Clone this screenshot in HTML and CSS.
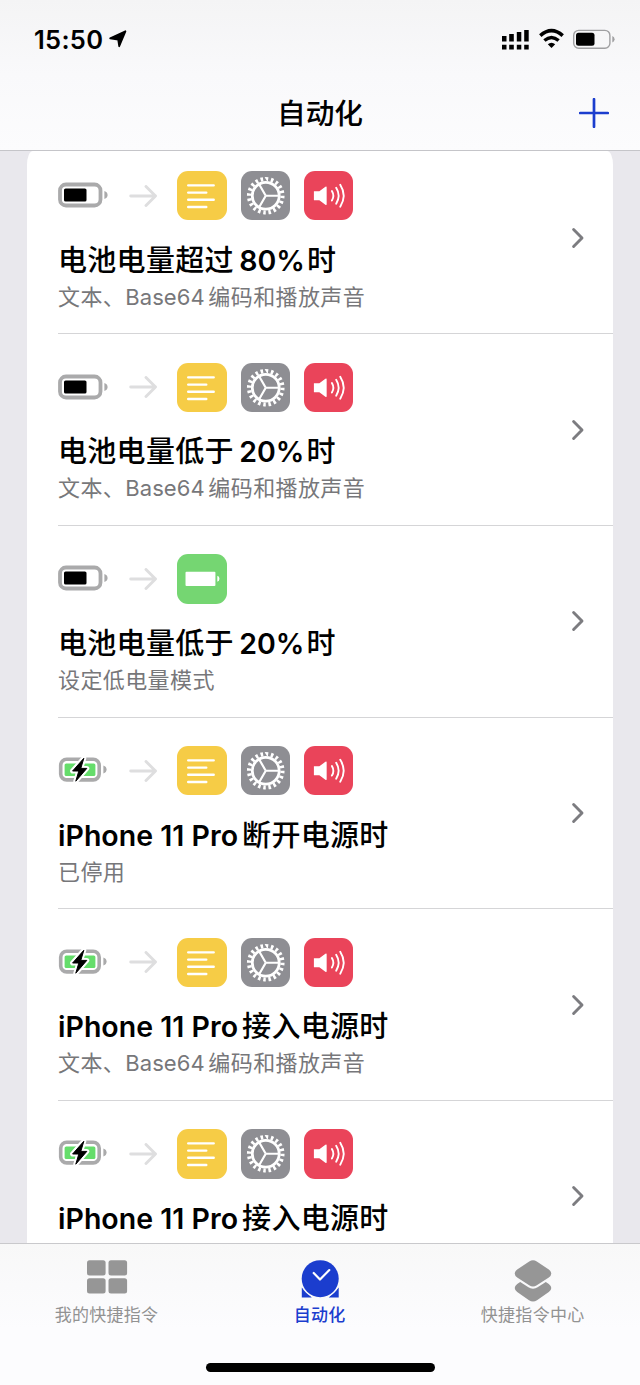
FILE: index.html
```html
<!DOCTYPE html>
<html lang="zh-CN">
<head>
<meta charset="utf-8">
<title>自动化</title>
<link rel="stylesheet" href="styles.css">
</head>
<body>
<svg class="symbols" width="0" height="0">
  <symbol id="battery" viewBox="0 0 50 26">
    <rect x="2" y="2.500" width="40.500" height="21" rx="6" fill="none" stroke="#aaaaab" stroke-width="3.800"/>
    <rect x="6" y="6.500" width="22.500" height="13" rx="1.600" fill="#000"/>
    <path d="M46.400 9.100q3.200 1.200 3.200 4t-3.200 4z" fill="#aaaaab"/>
  </symbol>
  <symbol id="charging" viewBox="0 0 50 26">
    <rect x="2.700" y="2.300" width="38.500" height="20.600" rx="6" fill="none" stroke="#aaaaab" stroke-width="3.600"/>
    <rect x="6.600" y="6.400" width="30.800" height="12.600" rx="1.600" fill="#65dd6b"/>
    <path d="M45.400 8.600q3.200 1.200 3.200 4t-3.200 4z" fill="#aaaaab"/>
    <path d="M25.800 1.300 14.600 14h6.200l-3 10.200L28.800 11.400h-6z" fill="#000" stroke="#fff" stroke-width="5" stroke-linejoin="round"/>
    <path d="M25.800 1.300 14.600 14h6.200l-3 10.200L28.800 11.400h-6z" stroke="#000" stroke-width="1" stroke-linejoin="round"/>
  </symbol>
  <symbol id="arrow" viewBox="0 0 28 22">
    <path d="M1.700 11H26.500M17 1.500 26.500 11l-9.500 9.500" fill="none" stroke="#dededf" stroke-width="2.900" stroke-linecap="round" stroke-linejoin="round"/>
  </symbol>
  <symbol id="text" viewBox="0 0 50 50">
    <path d="M11.300 14.500h25.800M11.300 21.800h18.300M11.300 29.100h25.800M11.300 36.400h18.300" fill="none" stroke="#fff" stroke-width="2.400" stroke-linecap="round"/>
  </symbol>
  <symbol id="gear" viewBox="0 0 50 50">
    <g fill="none" stroke="#fff">
      <circle cx="25" cy="25" r="16.900" stroke-width="4.200" pathLength="200" stroke-dasharray="4.800 5.200"/>
      <circle cx="25" cy="25" r="13.600" stroke-width="2.800"/>
      <path d="M25 25h14M25 25l-7-12.100M25 25l-7 12.100" stroke-width="2.200"/>
    </g>
  </symbol>
  <symbol id="sound" viewBox="0 0 50 50">
    <path d="M10 20.500h5.500L21.600 16q1.300-.8 1.300.6v17q0 1.300-1.300.5L15.500 29.600H10z" fill="#fff"/>
    <path d="M28.200 20.300q2.900 4.900 0 9.600M32.500 17q5 8 0 16M36.600 14q7 11 0 22" fill="none" stroke="#fff" stroke-width="1.900" stroke-linecap="round"/>
  </symbol>
  <symbol id="power" viewBox="0 0 50 50">
    <rect x="8.600" y="18" width="30.200" height="14.200" rx="1" fill="#fff"/>
    <path d="M40.700 22q2.200.6 2.200 3t-2.200 3z" fill="#fff"/>
  </symbol>
  <symbol id="chevron" viewBox="0 0 14 22">
    <path d="M2.600 2.500 11 11 2.600 19.500" fill="none" stroke="#7c7c80" stroke-width="2.900" stroke-linecap="round" stroke-linejoin="round"/>
  </symbol>
</svg>
<div class="screen">
  <header class="header">
    <div class="status">
      <span class="clock">15:50</span>
      <svg class="location" width="18" height="18" viewBox="0 0 18 18"><path d="M16.400 1.300 10.200 16.200 9.200 9.500 1.200 8.400z" stroke="#000" stroke-width="1.800" stroke-linejoin="round"/></svg>
      <svg class="signals" width="114" height="22" viewBox="0 0 114 22">
        <path d="M1 8h4.500v5.500H1zM8.200 6h4.600v7.500H8.200zM15.800 4h4.500v9.500h-4.500zM23.200 1.900h4.500v11.600h-4.500zM1 16.800h4.500v4.600H1zM8.200 16.800h4.600v4.600H8.200zM15.800 16.800h4.500v4.600h-4.500zM23.200 16.800h4.500v4.600h-4.500z"/>
        <path d="M39.300 7.700q11.200-10 22.400 0" fill="none" stroke="#000" stroke-width="3.600"/>
        <path d="M43.400 12.500q7.100-6.200 14.200 0" fill="none" stroke="#000" stroke-width="3.400"/>
        <path d="m50.500 20-3.700-3.700q3.700-3.100 7.400 0z"/>
        <rect x="72.700" y="2.400" width="36.200" height="17.800" rx="5" fill="none" stroke="#a0a0a2" stroke-width="1.400"/>
        <rect x="75" y="4.800" width="18.500" height="13" rx="2.500"/>
        <path d="M111.300 8q2.300.8 2.300 3.200t-2.300 3.200z" fill="#a0a0a2"/>
      </svg>
    </div>
    <div class="navbar">
      <h1>自动化</h1>
      <svg class="plus" width="30" height="30" viewBox="0 0 30 30"><path d="M15 1.200v27.600M1.200 15h27.600" stroke="#1b3dce" stroke-width="2.700" stroke-linecap="round"/></svg>
    </div>
  </header>

  <main class="list">
    <article class="row">
      <div class="info">
        <div class="flow"><svg class="trigger"><use href="#battery"/></svg><svg class="arrow"><use href="#arrow"/></svg><svg class="tile yellow"><use href="#text"/></svg><svg class="tile gray"><use href="#gear"/></svg><svg class="tile red"><use href="#sound"/></svg></div>
        <h2>电池电量超过<span class="percent">80%</span>时</h2>
        <p>文本、<span class="base">Base64</span>编码和播放声音</p>
      </div>
      <svg class="chevron"><use href="#chevron"/></svg>
    </article>
    <article class="row">
      <div class="info">
        <div class="flow"><svg class="trigger"><use href="#battery"/></svg><svg class="arrow"><use href="#arrow"/></svg><svg class="tile yellow"><use href="#text"/></svg><svg class="tile gray"><use href="#gear"/></svg><svg class="tile red"><use href="#sound"/></svg></div>
        <h2>电池电量低于<span class="percent">20%</span>时</h2>
        <p>文本、<span class="base">Base64</span>编码和播放声音</p>
      </div>
      <svg class="chevron"><use href="#chevron"/></svg>
    </article>
    <article class="row">
      <div class="info">
        <div class="flow"><svg class="trigger"><use href="#battery"/></svg><svg class="arrow"><use href="#arrow"/></svg><svg class="tile green"><use href="#power"/></svg></div>
        <h2>电池电量低于<span class="percent">20%</span>时</h2>
        <p>设定低电量模式</p>
      </div>
      <svg class="chevron"><use href="#chevron"/></svg>
    </article>
    <article class="row">
      <div class="info">
        <div class="flow"><svg class="trigger"><use href="#charging"/></svg><svg class="arrow"><use href="#arrow"/></svg><svg class="tile yellow"><use href="#text"/></svg><svg class="tile gray"><use href="#gear"/></svg><svg class="tile red"><use href="#sound"/></svg></div>
        <h2><span class="device">iPhone 11 Pro</span>断开电源时</h2>
        <p>已停用</p>
      </div>
      <svg class="chevron"><use href="#chevron"/></svg>
    </article>
    <article class="row">
      <div class="info">
        <div class="flow"><svg class="trigger"><use href="#charging"/></svg><svg class="arrow"><use href="#arrow"/></svg><svg class="tile yellow"><use href="#text"/></svg><svg class="tile gray"><use href="#gear"/></svg><svg class="tile red"><use href="#sound"/></svg></div>
        <h2><span class="device">iPhone 11 Pro</span>接入电源时</h2>
        <p>文本、<span class="base">Base64</span>编码和播放声音</p>
      </div>
      <svg class="chevron"><use href="#chevron"/></svg>
    </article>
    <article class="row">
      <div class="info">
        <div class="flow"><svg class="trigger"><use href="#charging"/></svg><svg class="arrow"><use href="#arrow"/></svg><svg class="tile yellow"><use href="#text"/></svg><svg class="tile gray"><use href="#gear"/></svg><svg class="tile red"><use href="#sound"/></svg></div>
        <h2><span class="device">iPhone 11 Pro</span>接入电源时</h2>
      </div>
      <svg class="chevron"><use href="#chevron"/></svg>
    </article>
  </main>

  <footer class="footer">
    <nav class="tabs">
      <a class="tab">
        <svg width="42" height="44" viewBox="0 0 42 44" fill="#969696"><rect x="1" y="2.200" width="18.600" height="15.200" rx="2.500"/><rect x="22.500" y="2.200" width="18.600" height="15.200" rx="2.500"/><rect x="1" y="20.200" width="18.600" height="15.200" rx="2.500"/><rect x="22.500" y="20.200" width="18.600" height="15.200" rx="2.500"/></svg>
        <span>我的快捷指令</span>
      </a>
      <a class="tab active">
        <svg width="42" height="44" viewBox="0 0 42 44"><path d="M2.800 29.500v10h10zM39.700 29.500v10h-10z" fill="#1b3dce"/><circle cx="21.200" cy="20.700" r="18.500" fill="#1b3dce" stroke="#f9f9fa" stroke-width="3" paint-order="stroke"/><path d="m14.700 15 6.300 6.500 9.300-9.400" fill="none" stroke="#fff" stroke-width="2.200" stroke-linecap="round" stroke-linejoin="round"/></svg>
        <span>自动化</span>
      </a>
      <a class="tab">
        <svg width="42" height="44" viewBox="0 0 42 44" fill="#969696"><path d="M5.200 26 17.800 17.500q3.200-2 6.400 0L36.800 26q5 4 0 8L25 42.200q-4 2.800-8 0L5.200 34q-5-4 0-8z"/><path d="M5.200 11.500 17.200 3.500q3.800-2.700 7.600 0L36.800 11.500q5 4 0 8L24.800 27.200q-3.800 2.700-7.600 0L5.200 19.500q-5-4 0-8z" stroke="#f9f9fa" stroke-width="4.400" paint-order="stroke"/></svg>
        <span>快捷指令中心</span>
      </a>
    </nav>
    <div class="home"></div>
  </footer>
</div>
</body>
</html>
```

FILE: styles.css
```css
* { box-sizing: border-box; }

body {
  margin: 0;
  font-family: Inter, "Noto Sans CJK SC", sans-serif;
  color: #000;
}

h1, h2, p { margin: 0; }
svg { display: block; flex: none; }
.symbols { position: absolute; }

.screen {
  width: 640px;
  height: 1385px;
  display: flex;
  flex-direction: column;
  overflow: hidden;
  background: #e9e8ed;
}

.header {
  flex: none;
  height: 151px;
  border-bottom: 1px solid #c5c5c9;
  background: linear-gradient(#f4f4f5, #f9f9fb 50%, #fcfcfd);
}

.status {
  display: flex;
  height: 76px;
  padding: 28px 25px 0 34px;
}

.clock {
  width: 68px;
  font-size: 25.500px;
  font-weight: 570;
  line-height: 24px;
  letter-spacing: 0.300px;
  white-space: nowrap;
}

.location { margin: 2px 0 0 7px; }
.signals { margin: 0 0 0 auto; }

.navbar {
  display: grid;
  grid-template-columns: 1fr auto 1fr;
  align-items: center;
  height: 74px;
  padding: 0 31px;
}

.navbar h1 {
  grid-column: 2;
  padding-top: 2px;
  font-size: 28.700px;
  font-weight: 500;
  line-height: 40px;
}

.plus { justify-self: end; }

.list {
  flex: 1;
  min-height: 0;
  width: 586px;
  margin-left: 27px;
  overflow: hidden;
  border-radius: 6px 6px 0 0 / 14px 14px 0 0;
  background: #fff;
}

.row {
  display: flex;
  height: 191.670px;
  margin-left: 31px;
  padding-top: 28px;
  border-bottom: 1px solid #d5d5d7;
}

.row:first-child {
  height: 183.300px;
  padding-top: 19.500px;
}

.row:last-child { border-bottom: 0; }
.info { flex: 1; }

.flow {
  display: flex;
  align-items: center;
  height: 50px;
}

.trigger { width: 50px; height: 26px; margin-bottom: 1px; }
.arrow { width: 28px; height: 22px; margin: 0 20.200px 0 21.300px; }

.tile {
  width: 49.500px;
  height: 49.500px;
  margin-right: 13.700px;
  border-radius: 11px;
}

.yellow { background: #f6cc46; }
.gray { background: #8e8e93; }
.red { background: #ea445a; }
.green { background: #75d672; }

.row h2 {
  height: 38px;
  margin-top: 21px;
  font-size: 29px;
  font-weight: 500;
  line-height: 38px;
  letter-spacing: 0.300px;
  white-space: nowrap;
}

.percent,
.device {
  font-size: 28.500px;
  font-weight: 600;
  letter-spacing: 0;
}

.percent { margin: 0 2px 0 5.500px; }
.device { margin-right: 4px; letter-spacing: 0.020px; }

.row p {
  height: 30px;
  margin-top: 2px;
  color: #77777a;
  font-size: 22px;
  line-height: 30px;
  letter-spacing: 0.400px;
  white-space: nowrap;
}

.base { margin-right: 3.500px; letter-spacing: 0.100px; }

.chevron {
  width: 14px;
  height: 22px;
  margin: 56.500px 28.500px 0 0;
}

.footer {
  flex: none;
  height: 142px;
  border-top: 1px solid #c9c9cc;
  background: linear-gradient(#f8f8f8, #fcfcfe 60%);
}

.tabs {
  display: grid;
  grid-template-columns: repeat(3, 1fr);
  height: 119px;
  padding: 14px 0.800px 0 0;
}

.tab {
  display: flex;
  flex-direction: column;
  align-items: center;
  color: #929292;
  font-size: 17px;
  line-height: 26px;
  letter-spacing: 0.300px;
}

.active { color: #1b3dce; font-weight: 500; }

.home {
  width: 229px;
  height: 9px;
  margin: 0 auto;
  border-radius: 5px;
  background: #000;
}
```
